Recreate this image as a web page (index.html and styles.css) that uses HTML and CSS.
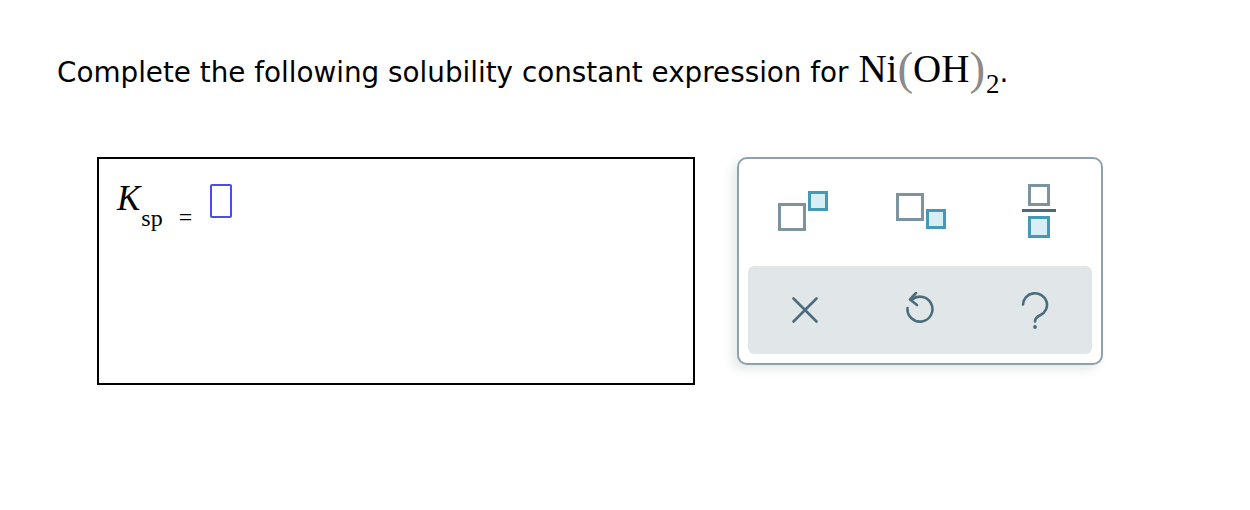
FILE: index.html
```html
<!DOCTYPE html>
<html>
<head>
<meta charset="utf-8">
<link rel="stylesheet" href="styles.css">
</head>
<body>
<div class="question">Complete the following solubility constant expression for <span class="chem">Ni<span class="paren">(</span>OH<span class="paren">)</span><span class="chem-sub">2</span></span>.</div>
<div class="work">
  <div class="answer">
    <div class="ksp"><i class="k">K</i><span class="sp">sp</span><span class="eq">=</span><span class="slot"></span></div>
  </div>
  <div class="panel">
    <div class="tools">
      <div class="tool">
        <svg width="50" height="40" viewBox="0 0 50 40">
          <rect x="1.5" y="13.5" width="25" height="25" class="g"/>
          <rect x="31.5" y="1.5" width="17" height="17" class="b"/>
        </svg>
      </div>
      <div class="tool">
        <svg width="50" height="36" viewBox="0 0 50 36">
          <rect x="1.5" y="1.5" width="25" height="25" class="g"/>
          <rect x="31.5" y="17.5" width="17" height="17" class="b"/>
        </svg>
      </div>
      <div class="tool">
        <svg width="34" height="54" viewBox="0 0 34 54">
          <rect x="7.5" y="1.5" width="19" height="19" class="g"/>
          <rect x="0" y="25" width="34" height="3" class="bar"/>
          <rect x="7.5" y="33.5" width="19" height="19" class="b"/>
        </svg>
      </div>
    </div>
    <div class="actions">
      <div class="action">
        <svg width="26" height="26" viewBox="0 0 26 26">
          <path d="M1.5 1.5 L24.5 24.5 M24.5 1.5 L1.5 24.5" class="d"/>
        </svg>
      </div>
      <div class="action">
        <svg width="30" height="36" viewBox="0 0 30 36">
          <path d="M7 7.5 A12.5 12.5 0 1 1 2.5 16" class="d"/>
          <path d="M11 1 L5 7.5 L12 13" class="d"/>
        </svg>
      </div>
      <div class="action">
        <svg width="28" height="38" viewBox="0 0 28 38">
          <path d="M2 13.5 A12 11.5 0 1 1 19.5 24 Q14 26.5 14 30.5" class="d"/>
          <circle cx="14" cy="36" r="1.9" class="dot"/>
        </svg>
      </div>
    </div>
  </div>
</div>
</body>
</html>
```
FILE: styles.css
```css
html, body {
  margin: 0;
  padding: 0;
  background: #fff;
}

.question {
  box-sizing: border-box;
  height: 157px;
  padding: 53px 0 0 57px;
  font-family: "DejaVu Sans", Verdana, sans-serif;
  font-size: 27.8px;
  line-height: 40px;
  color: #000;
}

.chem {
  font-family: "Liberation Serif", "Times New Roman", serif;
  font-size: 39px;
  line-height: 0;
  margin-left: 1px;
}

.paren {
  color: #8a8a8a;
  font-size: 47px;
  line-height: 0;
  vertical-align: -2px;
}

.chem-sub {
  font-size: 27px;
  line-height: 0;
  vertical-align: -11px;
  margin-left: 1px;
}

.work {
  display: flex;
  align-items: flex-start;
  gap: 42px;
  padding-left: 97px;
}

.answer {
  box-sizing: border-box;
  width: 598px;
  height: 228px;
  border: 2px solid #000;
}

.ksp {
  padding: 20px 0 0 18px;
  font-family: "Liberation Serif", "Times New Roman", serif;
  font-size: 35px;
  line-height: 40px;
  color: #000;
}

.k {
  font-style: italic;
}

.sp {
  font-size: 24px;
  line-height: 1;
  vertical-align: -16px;
  margin-left: 1px;
}

.eq {
  font-size: 24px;
  line-height: 1;
  vertical-align: -15px;
  margin-left: 16px;
}

.slot {
  display: inline-block;
  box-sizing: border-box;
  width: 22px;
  height: 34px;
  margin-left: 18px;
  border: 2px solid #4b4bf2;
  border-radius: 2px;
  vertical-align: -8px;
}

.panel {
  box-sizing: border-box;
  width: 366px;
  height: 208px;
  padding: 0 9px 9px;
  border: 2px solid #8fa1aa;
  border-radius: 10px;
  background: #fff;
  box-shadow: -5px 5px 10px rgba(60, 80, 90, 0.12);
  display: flex;
  flex-direction: column;
}

.tools {
  height: 107px;
  margin: 0 -9px;
  padding: 0 0 4px 5px;
  box-sizing: border-box;
  display: grid;
  grid-template-columns: 118px 118px 118px;
  align-items: center;
  justify-items: center;
}

.tool svg, .action svg {
  display: block;
}

.g {
  fill: #fff;
  stroke: #7d939d;
  stroke-width: 3;
}

.b {
  fill: #d7eef4;
  stroke: #4699b4;
  stroke-width: 3;
}

.bar {
  fill: #4f6a77;
}

.actions {
  flex: 1;
  background: #e1e6e9;
  border-radius: 6px;
  display: grid;
  grid-template-columns: 1fr 1fr 1fr;
  align-items: center;
  justify-items: center;
}

.d {
  fill: none;
  stroke: #4b6d7b;
  stroke-width: 2.6;
  stroke-linecap: round;
  stroke-linejoin: round;
}

.dot {
  fill: #4b6d7b;
}
```
